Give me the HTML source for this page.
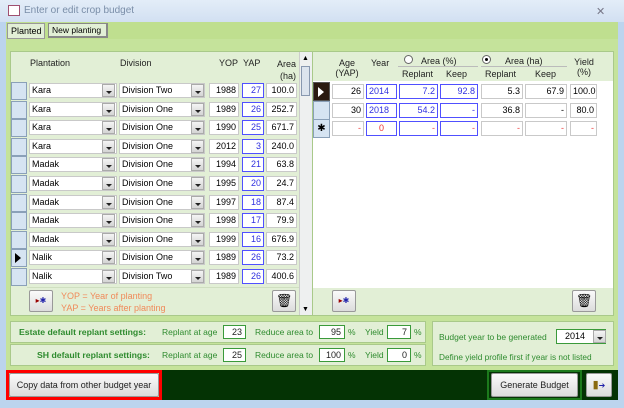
<!DOCTYPE html>
<html><head><meta charset="utf-8"><style>
*{box-sizing:border-box;margin:0;padding:0}
body{width:624px;height:408px;overflow:hidden;background:#bcd4ee;font-family:"Liberation Sans",sans-serif;font-size:9px;position:relative}
.a{position:absolute;white-space:nowrap}
.tb{left:0;top:0;width:624px;height:22px;background:linear-gradient(#e3edf8,#d2e0f2);}
.main{left:6px;top:22px;width:612px;height:378px;background:#bfdf8f}
.panel{background:#e2efd6;border:1px solid #a9c98a}
.box{background:#fff;border:1px solid #c9c9c9;height:15px;line-height:13px;padding:0 2px;white-space:nowrap;overflow:hidden}
.r{text-align:right}
.bl{border-color:#5050ff;color:#3030e0}
.dd{width:13px;height:13px;background:linear-gradient(#f4f4f4,#d4d4d4);border:1px solid #aaa;top:1px}
.dd:after{content:"";position:absolute;left:3px;top:6px;border-left:3px solid transparent;border-right:3px solid transparent;border-top:3px solid #222}
.sel{width:16px;height:18px;background:#d6e4f2;border:1px solid #8aa0b8;left:11px}
.hd{color:#222;font-size:9px}
.g{color:#2e8b2e;font-size:8.5px}
.gb{color:#2e8b2e;font-weight:bold;font-size:8.7px}
.btn{background:linear-gradient(#fafafa,#dcdcdc);border:1px solid #999;border-radius:2px}
.ib{background:#fff;border:1px solid #3a9a3a;height:14px;line-height:12px;text-align:right;padding-right:3px;color:#222}
.red{color:#f04040}
</style></head><body>
<div class="a tb"></div>
<div class="a" style="left:8px;top:5px;width:12px;height:11px;border:1px solid #a05070;background:#fff"></div>
<div class="a" style="left:24px;top:5px;font-size:10px;color:#7a8ea8">Enter or edit crop budget</div>
<div class="a" style="left:596px;top:5px;font-size:11px;color:#778">✕</div>
<div class="a main"></div>
<div class="a" style="left:7px;top:23px;width:38px;height:16px;background:#e2efd6;border:1px solid #999;line-height:14px;padding-left:3px;font-size:9px">Planted</div>
<div class="a" style="left:48px;top:23px;width:60px;height:15px;background:#e2efd6;border:1px solid #888;border-right-width:2px;border-bottom-width:2px;line-height:12px;padding-left:3px;font-size:8.5px">New planting</div>
<div class="a" style="left:6px;top:39px;width:612px;height:330px;background:#c5e39b"></div>

<!-- left panel -->
<div class="a panel" style="left:10px;top:51px;width:302px;height:265px"></div>
<div class="a hd" style="left:30px;top:58px">Plantation</div>
<div class="a hd" style="left:120px;top:58px">Division</div>
<div class="a hd" style="left:219px;top:58px">YOP</div>
<div class="a hd" style="left:243px;top:58px">YAP</div>
<div class="a hd r" style="left:270px;top:58px;width:26px;line-height:12px">Area<br>(ha)</div>
<div class="a" style="left:299px;top:52px;width:13px;height:263px;background:#eef0f0;border-left:1px solid #ccc"></div>
<div class="a" style="left:301px;top:66px;width:9px;height:30px;background:#dce4ee;border:1px solid #8898b0"></div>
<div class="a" style="left:302px;top:55px;font-size:7px">▲</div>
<div class="a" style="left:302px;top:306px;font-size:7px">▼</div>

<div class="a" style="left:0;top:0">
<div class="a" style="left:0;top:82px">
<div class="a sel" style="top:0"></div><div class="a box" style="left:29px;top:1px;width:88px">Kara</div><div class="a dd" style="left:102px;top:2px"></div><div class="a box" style="left:119px;top:1px;width:86px">Division Two</div><div class="a dd" style="left:191px;top:2px"></div><div class="a box r" style="left:209px;top:1px;width:30px">1988</div><div class="a box r bl" style="left:242px;top:1px;width:22px">27</div><div class="a box r" style="left:266px;top:1px;width:31px">100.0</div></div>
<div class="a" style="left:0;top:101px">
<div class="a sel"></div><div class="a box" style="left:29px;top:1px;width:88px">Kara</div><div class="a dd" style="left:102px;top:2px"></div><div class="a box" style="left:119px;top:1px;width:86px">Division One</div><div class="a dd" style="left:191px;top:2px"></div><div class="a box r" style="left:209px;top:1px;width:30px">1989</div><div class="a box r bl" style="left:242px;top:1px;width:22px">26</div><div class="a box r" style="left:266px;top:1px;width:31px">252.7</div></div>
<div class="a" style="left:0;top:119px">
<div class="a sel"></div><div class="a box" style="left:29px;top:1px;width:88px">Kara</div><div class="a dd" style="left:102px;top:2px"></div><div class="a box" style="left:119px;top:1px;width:86px">Division One</div><div class="a dd" style="left:191px;top:2px"></div><div class="a box r" style="left:209px;top:1px;width:30px">1990</div><div class="a box r bl" style="left:242px;top:1px;width:22px">25</div><div class="a box r" style="left:266px;top:1px;width:31px">671.7</div></div>
<div class="a" style="left:0;top:138px">
<div class="a sel"></div><div class="a box" style="left:29px;top:1px;width:88px">Kara</div><div class="a dd" style="left:102px;top:2px"></div><div class="a box" style="left:119px;top:1px;width:86px">Division One</div><div class="a dd" style="left:191px;top:2px"></div><div class="a box r" style="left:209px;top:1px;width:30px">2012</div><div class="a box r bl" style="left:242px;top:1px;width:22px">3</div><div class="a box r" style="left:266px;top:1px;width:31px">240.0</div></div>
<div class="a" style="left:0;top:156px">
<div class="a sel"></div><div class="a box" style="left:29px;top:1px;width:88px">Madak</div><div class="a dd" style="left:102px;top:2px"></div><div class="a box" style="left:119px;top:1px;width:86px">Division One</div><div class="a dd" style="left:191px;top:2px"></div><div class="a box r" style="left:209px;top:1px;width:30px">1994</div><div class="a box r bl" style="left:242px;top:1px;width:22px">21</div><div class="a box r" style="left:266px;top:1px;width:31px">63.8</div></div>
<div class="a" style="left:0;top:175px">
<div class="a sel"></div><div class="a box" style="left:29px;top:1px;width:88px">Madak</div><div class="a dd" style="left:102px;top:2px"></div><div class="a box" style="left:119px;top:1px;width:86px">Division One</div><div class="a dd" style="left:191px;top:2px"></div><div class="a box r" style="left:209px;top:1px;width:30px">1995</div><div class="a box r bl" style="left:242px;top:1px;width:22px">20</div><div class="a box r" style="left:266px;top:1px;width:31px">24.7</div></div>
<div class="a" style="left:0;top:194px">
<div class="a sel"></div><div class="a box" style="left:29px;top:1px;width:88px">Madak</div><div class="a dd" style="left:102px;top:2px"></div><div class="a box" style="left:119px;top:1px;width:86px">Division One</div><div class="a dd" style="left:191px;top:2px"></div><div class="a box r" style="left:209px;top:1px;width:30px">1997</div><div class="a box r bl" style="left:242px;top:1px;width:22px">18</div><div class="a box r" style="left:266px;top:1px;width:31px">87.4</div></div>
<div class="a" style="left:0;top:212px">
<div class="a sel"></div><div class="a box" style="left:29px;top:1px;width:88px">Madak</div><div class="a dd" style="left:102px;top:2px"></div><div class="a box" style="left:119px;top:1px;width:86px">Division One</div><div class="a dd" style="left:191px;top:2px"></div><div class="a box r" style="left:209px;top:1px;width:30px">1998</div><div class="a box r bl" style="left:242px;top:1px;width:22px">17</div><div class="a box r" style="left:266px;top:1px;width:31px">79.9</div></div>
<div class="a" style="left:0;top:231px">
<div class="a sel"></div><div class="a box" style="left:29px;top:1px;width:88px">Madak</div><div class="a dd" style="left:102px;top:2px"></div><div class="a box" style="left:119px;top:1px;width:86px">Division One</div><div class="a dd" style="left:191px;top:2px"></div><div class="a box r" style="left:209px;top:1px;width:30px">1999</div><div class="a box r bl" style="left:242px;top:1px;width:22px">16</div><div class="a box r" style="left:266px;top:1px;width:31px">676.9</div></div>
<div class="a" style="left:0;top:249px">
<div class="a sel"><div class="a" style="left:3px;top:3px;border-top:5px solid transparent;border-bottom:5px solid transparent;border-left:6px solid #000"></div></div><div class="a box" style="left:29px;top:1px;width:88px">Nalik</div><div class="a dd" style="left:102px;top:2px"></div><div class="a box" style="left:119px;top:1px;width:86px">Division One</div><div class="a dd" style="left:191px;top:2px"></div><div class="a box r" style="left:209px;top:1px;width:30px">1989</div><div class="a box r bl" style="left:242px;top:1px;width:22px">26</div><div class="a box r" style="left:266px;top:1px;width:31px">73.2</div></div>
<div class="a" style="left:0;top:268px">
<div class="a sel"></div><div class="a box" style="left:29px;top:1px;width:88px">Nalik</div><div class="a dd" style="left:102px;top:2px"></div><div class="a box" style="left:119px;top:1px;width:86px">Division Two</div><div class="a dd" style="left:191px;top:2px"></div><div class="a box r" style="left:209px;top:1px;width:30px">1989</div><div class="a box r bl" style="left:242px;top:1px;width:22px">26</div><div class="a box r" style="left:266px;top:1px;width:31px">400.6</div></div>
</div>
<div class="a" style="left:27px;top:287px;width:272px;height:1px;background:#cfdfc0"></div>
<div class="a btn" style="left:29px;top:290px;width:24px;height:22px;text-align:center;line-height:20px;font-size:8px"><span style="color:#900">▸</span><span style="color:#22a">✱</span></div>
<div class="a" style="left:61px;top:290px;color:#f08a5a;font-size:9px;line-height:12px">YOP = Year of planting<br>YAP = Years after planting</div>
<div class="a btn" style="left:272px;top:290px;width:24px;height:22px;text-align:center;line-height:20px;font-size:13px">🗑</div>

<!-- right panel -->
<div class="a panel" style="left:312px;top:51px;width:302px;height:265px"></div>
<div class="a" style="left:313px;top:81px;width:300px;height:207px;background:#fff"></div>
<div class="a hd" style="left:332px;top:58px;width:30px;text-align:center;line-height:10px">Age<br>(YAP)</div>
<div class="a hd" style="left:371px;top:58px">Year</div>
<div class="a" style="left:404px;top:55px;width:9px;height:9px;border:1px solid #666;border-radius:50%;background:#fff"></div>
<div class="a hd" style="left:421px;top:56px">Area (%)</div>
<div class="a" style="left:398px;top:66px;width:80px;height:1px;background:#bbb"></div>
<div class="a hd" style="left:402px;top:69px">Replant</div>
<div class="a hd" style="left:446px;top:69px">Keep</div>
<div class="a" style="left:482px;top:55px;width:9px;height:9px;border:1px solid #666;border-radius:50%;background:#fff"><div class="a" style="left:2px;top:2px;width:3px;height:3px;background:#000;border-radius:50%"></div></div>
<div class="a hd" style="left:505px;top:56px">Area (ha)</div>
<div class="a" style="left:481px;top:66px;width:86px;height:1px;background:#bbb"></div>
<div class="a hd" style="left:485px;top:69px">Replant</div>
<div class="a hd" style="left:535px;top:69px">Keep</div>
<div class="a hd" style="left:572px;top:57px;width:24px;text-align:center;line-height:10px">Yield<br>(%)</div>

<div class="a" style="left:313px;top:82px;width:17px;height:19px;background:#2a1a10;border:1px solid #555"><div class="a" style="left:4px;top:4px;border-top:5px solid transparent;border-bottom:5px solid transparent;border-left:6px solid #fff"></div></div>
<div class="a" style="left:313px;top:101px;width:17px;height:19px;background:#d6e4f2;border:1px solid #8aa0b8"></div>
<div class="a" style="left:313px;top:119px;width:17px;height:19px;background:#d6e4f2;border:1px solid #8aa0b8;text-align:center;font-size:10px;line-height:17px">✱</div>

<div class="a box r" style="left:332px;top:84px;width:32px">26</div>
<div class="a box bl" style="left:366px;top:84px;width:31px">2014</div>
<div class="a box r bl" style="left:399px;top:84px;width:39px">7.2</div>
<div class="a box r bl" style="left:440px;top:84px;width:38px">92.8</div>
<div class="a box r" style="left:481px;top:84px;width:42px">5.3</div>
<div class="a box r" style="left:525px;top:84px;width:42px">67.9</div>
<div class="a box r" style="left:570px;top:84px;width:27px">100.0</div>

<div class="a box r" style="left:332px;top:103px;width:32px">30</div>
<div class="a box bl" style="left:366px;top:103px;width:31px">2018</div>
<div class="a box r bl" style="left:399px;top:103px;width:39px">54.2</div>
<div class="a box r bl" style="left:440px;top:103px;width:38px">-</div>
<div class="a box r" style="left:481px;top:103px;width:42px">36.8</div>
<div class="a box r" style="left:525px;top:103px;width:42px">-</div>
<div class="a box r" style="left:570px;top:103px;width:27px">80.0</div>

<div class="a box r red" style="left:332px;top:121px;width:32px">-</div>
<div class="a box" style="left:366px;top:121px;width:31px;border-color:#5050ff;color:#f03030;text-align:center">0</div>
<div class="a box r red" style="left:399px;top:121px;width:39px;border-color:#5050ff">-</div>
<div class="a box r red" style="left:440px;top:121px;width:38px;border-color:#5050ff">-</div>
<div class="a box r red" style="left:481px;top:121px;width:42px">-</div>
<div class="a box r red" style="left:525px;top:121px;width:42px">-</div>
<div class="a box r red" style="left:570px;top:121px;width:27px">-</div>

<div class="a btn" style="left:332px;top:290px;width:24px;height:22px;text-align:center;line-height:20px;font-size:8px"><span style="color:#900">▸</span><span style="color:#22a">✱</span></div>
<div class="a btn" style="left:572px;top:290px;width:24px;height:22px;text-align:center;line-height:20px;font-size:13px">🗑</div>

<!-- settings -->
<div class="a panel" style="left:10px;top:321px;width:416px;height:22px"></div>
<div class="a panel" style="left:10px;top:344px;width:416px;height:22px"></div>
<div class="a gb" style="left:19px;top:327px">Estate default replant settings:</div>
<div class="a g" style="left:162px;top:327px">Replant at age</div>
<div class="a ib" style="left:223px;top:325px;width:23px">23</div>
<div class="a g" style="left:255px;top:327px">Reduce area to</div>
<div class="a ib" style="left:319px;top:325px;width:26px">95</div>
<div class="a g" style="left:348px;top:327px">%</div>
<div class="a g" style="left:365px;top:327px">Yield</div>
<div class="a ib" style="left:387px;top:325px;width:24px">7</div>
<div class="a g" style="left:414px;top:327px">%</div>
<div class="a gb" style="left:37px;top:350px">SH default replant settings:</div>
<div class="a g" style="left:162px;top:350px">Replant at age</div>
<div class="a ib" style="left:223px;top:348px;width:23px">25</div>
<div class="a g" style="left:255px;top:350px">Reduce area to</div>
<div class="a ib" style="left:319px;top:348px;width:26px">100</div>
<div class="a g" style="left:348px;top:350px">%</div>
<div class="a g" style="left:365px;top:350px">Yield</div>
<div class="a ib" style="left:387px;top:348px;width:24px">0</div>
<div class="a g" style="left:414px;top:350px">%</div>

<div class="a panel" style="left:432px;top:321px;width:182px;height:45px"></div>
<div class="a g" style="left:439px;top:332px">Budget year to be generated</div>
<div class="a" style="left:556px;top:329px;width:50px;height:15px;background:#fff;border:1px solid #3a9a3a;font-size:9px;line-height:13px;padding-left:8px">2014</div>
<div class="a dd" style="left:593px;top:330px"></div>
<div class="a g" style="left:439px;top:352px;font-size:8.3px">Define yield profile first if year is not listed</div>

<!-- bottom -->
<div class="a" style="left:6px;top:369px;width:612px;height:31px;background:#c5e39b"></div>
<div class="a" style="left:162px;top:370px;width:325px;height:30px;background:#043304"></div>
<div class="a" style="left:6px;top:370px;width:156px;height:30px;border:3px solid #f00"></div>
<div class="a btn" style="left:9px;top:373px;width:150px;height:24px;text-align:center;line-height:22px;font-size:9px;color:#222">Copy data from other budget year</div>
<div class="a" style="left:487px;top:370px;width:95px;height:30px;background:#043304;border:2px solid #1c7a1c"></div>
<div class="a btn" style="left:491px;top:373px;width:87px;height:24px;text-align:center;line-height:22px;font-size:9px;color:#222">Generate Budget</div>
<div class="a" style="left:582px;top:370px;width:36px;height:30px;background:#043304"></div>
<div class="a btn" style="left:586px;top:373px;width:26px;height:24px;text-align:center;line-height:22px;font-size:11px;color:#8a6a10">▮<span style="color:#22a;font-size:8px">➔</span></div>
</body></html>
